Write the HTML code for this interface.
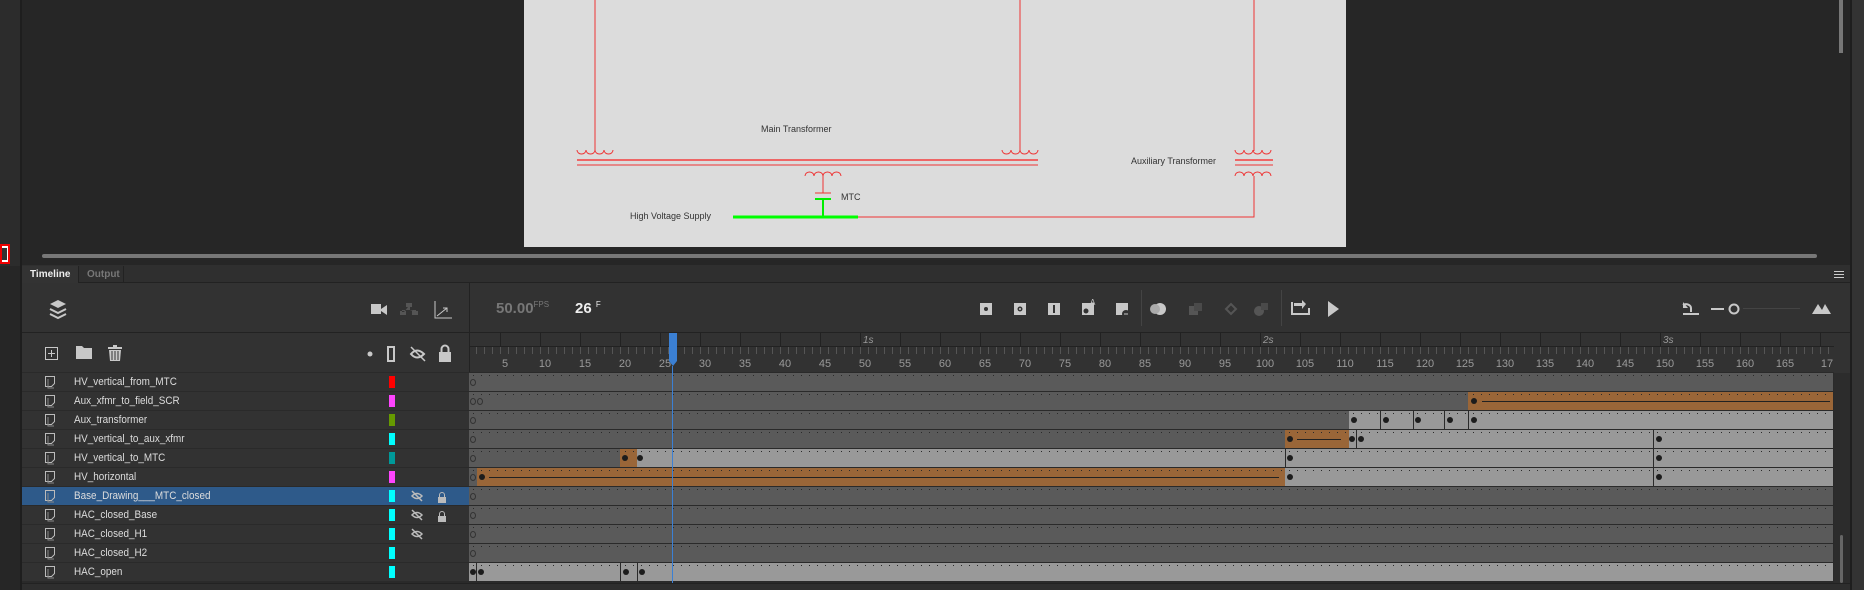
<!DOCTYPE html>
<html><head><meta charset="utf-8"><style>
*{margin:0;padding:0;box-sizing:border-box}
body{width:1864px;height:590px;background:#262626;position:relative;overflow:hidden;font-family:"Liberation Sans",sans-serif}
.a{position:absolute}
.row{position:absolute;height:18px}
.dk{background:#5a5a5a}
.lt{background:#999}
.or{background:#9a6638}
.kf{position:absolute;width:6px;height:6px;border-radius:50%;background:#1c1c1c;top:6px}
.dv{position:absolute;width:1px;height:18px;background:#2a2a2a;top:0}
.ln{position:absolute;height:1px;background:#2a2a2a;top:9px}
.ec{position:absolute;width:6px;height:7px;border:1px solid #333;border-radius:50%;top:6px;left:1px}
.name{position:absolute;left:52px;font-size:11px;color:#ddd;line-height:18px;transform:scaleX(.9);transform-origin:left}
.sw{position:absolute;left:367px;width:6px;height:12px;top:3px}
</style></head><body>
<div class="a" style="left:0;top:0;width:20px;height:266px;background:#2c2c2c"></div>
<div class="a" style="left:0;top:244px;width:10px;height:20px;border:2px solid #e00;background:#fff"></div>
<div class="a" style="left:2px;top:248px;width:5px;height:12px;background:#333"></div>
<div class="a" style="left:20px;top:0;width:2px;height:590px;background:#1e1e1e"></div>
<div class="a" style="left:1850px;top:0;width:14px;height:590px;background:#333;border-left:2px solid #1e1e1e"></div>
<div class="a" style="left:1839px;top:0;width:4px;height:53px;background:#777"></div>
<div class="a" style="left:42px;top:254px;width:1775px;height:4px;background:#777;border-radius:2px"></div>
<div class="a" style="left:524px;top:0;width:822px;height:247px;background:#dcdcdc"></div>
<svg class="a" style="left:0;top:0" width="1864" height="260" fill="none">
<g stroke="#e33" stroke-width="1">
<path d="M595 0V152M1020 0V152M1254 0V151"/>
<path d="M577 150a4.5 4 0 0 0 9 0a4.5 4 0 0 0 9 0a4.5 4 0 0 0 9 0a4.5 4 0 0 0 9 0"/>
<path d="M1002 150a4.5 4 0 0 0 9 0a4.5 4 0 0 0 9 0a4.5 4 0 0 0 9 0a4.5 4 0 0 0 9 0"/>
<path d="M1235 150a4.5 4 0 0 0 9 0a4.5 4 0 0 0 9 0a4.5 4 0 0 0 9 0a4.5 4 0 0 0 9 0"/>
<path d="M805 176a4.5 4 0 0 1 9 0a4.5 4 0 0 1 9 0a4.5 4 0 0 1 9 0a4.5 4 0 0 1 9 0"/>
<path d="M1235 176a4.5 4 0 0 1 9 0a4.5 4 0 0 1 9 0a4.5 4 0 0 1 9 0a4.5 4 0 0 1 9 0"/>
<path d="M577 165H1038M1235 165H1273M823 176V193M815 193H831M858 217H1254V176"/>
</g>
<path d="M577 160H1038M1235 160H1273" stroke="#e66" stroke-width="2"/>
<path d="M815 199H831M823 199V217" stroke="#0e0" stroke-width="2"/>
<path d="M733 217H858" stroke="#0f0" stroke-width="3"/>
<g fill="#333" font-family="Liberation Sans" font-size="9">
<text x="761" y="132">Main Transformer</text>
<text x="1131" y="164">Auxiliary Transformer</text>
<text x="841" y="200">MTC</text>
<text x="630" y="219">High Voltage Supply</text>
</g>
</svg>
<div class="a" style="left:22px;top:265px;width:1828px;height:18px;background:#2f2f2f;border-bottom:1px solid #222"></div>
<div class="a" style="left:22px;top:266px;width:56px;height:17px;background:#333;color:#eee;font-size:10px;font-weight:bold;line-height:17px;padding-left:8px">Timeline</div>
<div class="a" style="left:78px;top:266px;width:46px;height:17px;color:#777;font-size:10px;font-weight:bold;line-height:17px;padding-left:8px;border-left:1px solid #222;border-right:1px solid #222">Output</div>
<div class="a" style="left:1834px;top:271px;width:10px;height:7px;border-top:1px solid #ccc;border-bottom:1px solid #ccc"><div style="margin-top:2px;height:1px;background:#ccc"></div></div>
<div class="a" style="left:22px;top:283px;width:1828px;height:307px;background:#323232"></div>
<div class="a" style="left:22px;top:332px;width:447px;height:1px;background:#222"></div>
<div class="a" style="left:469px;top:283px;width:1px;height:307px;background:#222"></div>
<div class="a" style="left:470px;top:332px;width:1380px;height:1px;background:#222"></div>
<svg class="a" style="left:22px;top:283px" width="447" height="90" fill="#c8c8c8">
<path d="M28 21l8-4 8 4-8 4z"/><path d="M28 26l8 4 8-4" stroke="#c8c8c8" stroke-width="2" fill="none"/><path d="M28 31l8 4 8-4" stroke="#c8c8c8" stroke-width="2" fill="none"/>
<path d="M349 21h10v10h-10zM359 26l6-4v10l-6-4z"/>
<path d="M384 20h6v4h-6zM378 28h6v4h-6zM390 28h6v4h-6zM386 24h2v3h-8v2h2M388 27h6v2" fill="#555"/>
<path d="M413 18v17h17" stroke="#c8c8c8" fill="none"/><path d="M415 33l10-8M421 25h4v4" stroke="#c8c8c8" fill="none"/>
<rect x="23.5" y="64.5" width="12" height="12" fill="none" stroke="#c8c8c8"/><path d="M29.5 67v7M26 70.5h7" stroke="#c8c8c8"/>
<path d="M54 63h6l2 2h8v11h-16z"/>
<path d="M86 64h14v2h-14zM91 62h4v2h-4zM87 67h12l-1 11h-10z"/><path d="M90 68v9M93 68v9M96 68v9" stroke="#323232"/>
<circle cx="348" cy="71" r="2.5"/>
<rect x="366" y="64" width="6" height="14" fill="none" stroke="#c8c8c8" stroke-width="2"/>
<path d="M389 71q6-7 13 0q-7 7-13 0z" fill="none" stroke="#c8c8c8" stroke-width="2"/><path d="M389 64l14 14" stroke="#c8c8c8" stroke-width="1.5"/>
<path d="M417 69h12v10h-12z"/><path d="M419.5 69v-3a3.5 3.5 0 0 1 7 0v3" fill="none" stroke="#c8c8c8" stroke-width="2"/>
</svg>
<div class="a" style="left:496px;top:300px;font-size:15px;color:#777;font-weight:bold">50.00<sup style="font-size:8px;font-weight:normal">FPS</sup></div>
<div class="a" style="left:575px;top:300px;font-size:15px;color:#eee;font-weight:bold">26 <sup style="font-size:8px;font-weight:normal">F</sup></div>
<svg class="a" style="left:470px;top:283px" width="1380" height="50">
<g fill="#c8c8c8">
<rect x="510" y="20" width="12" height="12"/><rect x="544" y="20" width="12" height="12"/><rect x="578" y="20" width="12" height="12"/><rect x="612" y="20" width="12" height="12"/><rect x="646" y="20" width="12" height="12"/>
<circle cx="690" cy="26" r="6"/><circle cx="685" cy="26" r="5" fill="#aaa"/>
<path d="M822 19v12h17v-6" fill="none" stroke="#c8c8c8" stroke-width="2"/>
<path d="M836 21l-4-4v3h-8v3h8v3z"/>
<path d="M858 18l11 8-11 8z"/>
<path d="M1213 22a5 4 0 0 1 8 3v4" fill="none" stroke="#c8c8c8" stroke-width="2"/><path d="M1213 31h16" stroke="#c8c8c8" stroke-width="2"/><path d="M1213 19v6h5z"/>
<rect x="1241" y="25" width="13" height="2"/><circle cx="1264" cy="26" r="4.5" fill="none" stroke="#c8c8c8" stroke-width="2"/>
<path d="M1342 31l6-10 4 6 3-6 6 10z"/>
</g>
<g fill="#323232"><circle cx="516" cy="26" r="2"/><circle cx="550" cy="26" r="2.5"/><rect x="583" y="22" width="2" height="8"/><circle cx="616" cy="28" r="2.5"/><circle cx="656" cy="31" r="4"/></g>
<circle cx="550" cy="26" r="1" fill="#c8c8c8"/>
<path d="M654 31h4" stroke="#c8c8c8"/>
<text x="620" y="22" font-size="8" fill="#c8c8c8" font-family="Liberation Sans">A</text>
<g fill="#555"><rect x="719" y="23" width="9" height="9"/><rect x="724" y="20" width="8" height="8" fill="#4a4a4a"/><path d="M756 26l5-5 5 5-5 5z" stroke="#555" stroke-width="2" fill="none"/><circle cx="789" cy="28" r="5"/><rect x="791" y="20" width="7" height="7" fill="#4a4a4a"/></g>
<rect x="671" y="7" width="1" height="36" fill="#444"/><rect x="811" y="7" width="1" height="36" fill="#444"/>
<rect x="1273" y="25" width="57" height="1" fill="#444"/>
</svg>
<div class="a" style="left:470px;top:346px;width:1364px;height:1px;background:#222"></div>
<div class="a" style="left:470px;top:333px;width:1364px;height:14px;background:repeating-linear-gradient(90deg,transparent 0 30px,#222 30px 31px,transparent 31px 40px)"></div>
<div class="a" style="left:470px;top:347px;width:1364px;height:7px;background:repeating-linear-gradient(90deg,transparent 0 6px,#555 6px 7px,transparent 7px 8px)"></div>
<div class="a" style="left:863px;top:335px;font-size:10px;color:#999;font-style:italic">1s</div>
<div class="a" style="left:1263px;top:335px;font-size:10px;color:#999;font-style:italic">2s</div>
<div class="a" style="left:1663px;top:335px;font-size:10px;color:#999;font-style:italic">3s</div>
<svg class="a" style="left:469px;top:355px" width="1370" height="16"><g font-family="Liberation Sans" font-size="11" fill="#999" text-anchor="middle">
<text x="36" y="12">5</text><text x="76" y="12">10</text><text x="116" y="12">15</text><text x="156" y="12">20</text><text x="196" y="12">25</text><text x="236" y="12">30</text><text x="276" y="12">35</text><text x="316" y="12">40</text><text x="356" y="12">45</text><text x="396" y="12">50</text><text x="436" y="12">55</text><text x="476" y="12">60</text><text x="516" y="12">65</text><text x="556" y="12">70</text><text x="596" y="12">75</text><text x="636" y="12">80</text><text x="676" y="12">85</text><text x="716" y="12">90</text><text x="756" y="12">95</text><text x="796" y="12">100</text><text x="836" y="12">105</text><text x="876" y="12">110</text><text x="916" y="12">115</text><text x="956" y="12">120</text><text x="996" y="12">125</text><text x="1036" y="12">130</text><text x="1076" y="12">135</text><text x="1116" y="12">140</text><text x="1156" y="12">145</text><text x="1196" y="12">150</text><text x="1236" y="12">155</text><text x="1276" y="12">160</text><text x="1316" y="12">165</text><text x="1358" y="12">17</text></g></svg>
<div class="a" style="left:469px;top:372px;width:1365px;height:211px;background:#2a2a2a"></div>
<div class="a" style="left:22px;top:372px;width:447px;height:211px;background:#2a2a2a"></div>
<div class="a" style="left:22px;top:373px;width:447px">
<div class="row" style="top:0;width:447px;background:#323232"><div class="name">HV_vertical_from_MTC</div><div class="sw" style="background:#f00"></div></div>
<div class="row" style="top:19px;width:447px;background:#323232"><div class="name">Aux_xfmr_to_field_SCR</div><div class="sw" style="background:#f4f"></div></div>
<div class="row" style="top:38px;width:447px;background:#323232"><div class="name">Aux_transformer</div><div class="sw" style="background:#690"></div></div>
<div class="row" style="top:57px;width:447px;background:#323232"><div class="name">HV_vertical_to_aux_xfmr</div><div class="sw" style="background:#0ff"></div></div>
<div class="row" style="top:76px;width:447px;background:#323232"><div class="name">HV_vertical_to_MTC</div><div class="sw" style="background:#099"></div></div>
<div class="row" style="top:95px;width:447px;background:#323232"><div class="name">HV_horizontal</div><div class="sw" style="background:#f4f"></div></div>
<div class="row" style="top:114px;width:447px;background:#2e5a8a"><div class="name">Base_Drawing___MTC_closed</div><div class="sw" style="background:#0ff"></div></div>
<div class="row" style="top:133px;width:447px;background:#323232"><div class="name">HAC_closed_Base</div><div class="sw" style="background:#0ff"></div></div>
<div class="row" style="top:152px;width:447px;background:#323232"><div class="name">HAC_closed_H1</div><div class="sw" style="background:#0ff"></div></div>
<div class="row" style="top:171px;width:447px;background:#323232"><div class="name">HAC_closed_H2</div><div class="sw" style="background:#0ff"></div></div>
<div class="row" style="top:190px;width:447px;background:#323232"><div class="name">HAC_open</div><div class="sw" style="background:#0ff"></div></div>
<svg class="a" style="left:0;top:0" width="447" height="210" fill="none" stroke="#bbb">
<g id="li"><path d="M23.5 3.5h9v7l-3 3h-6z"/><path d="M26 6v9h6" stroke="#888"/></g>
<use href="#li" y="19"/><use href="#li" y="38"/><use href="#li" y="57"/><use href="#li" y="76"/><use href="#li" y="95"/><use href="#li" y="114"/><use href="#li" y="133"/><use href="#li" y="152"/><use href="#li" y="171"/><use href="#li" y="190"/>
<g id="ey" stroke="#bbb" stroke-width="1.5"><path d="M390 123q5-5 10 0q-5 5-10 0z"/><path d="M390 118l10 10"/></g>
<use href="#ey" y="19"/><use href="#ey" y="38"/>
<g id="lk" fill="#bbb" stroke="none"><rect x="416" y="124" width="8" height="6"/><path d="M417.5 124v-2a2.5 2.5 0 0 1 5 0v2" stroke="#bbb" fill="none"/></g>
<use href="#lk" y="19"/>
</svg>
</div>
<div class="a" style="left:469px;top:373px;width:1365px;height:210px">
<div class="row dk" style="top:0;left:0;width:1364px"><div class="ec"></div></div>
<div class="row dk" style="top:19px;left:0;width:999px"><div class="ec"></div><div class="ec" style="left:8px"></div></div>
<div class="row or" style="top:19px;left:999px;width:365px"><div class="kf" style="left:3px"></div><div class="ln" style="left:14px;width:348px;background:#222"></div></div>
<div class="row dk" style="top:38px;left:0;width:880px"><div class="ec"></div></div>
<div class="row lt" style="top:38px;left:880px;width:484px"><div class="kf" style="left:2px"></div><div class="dv" style="left:31px"></div><div class="kf" style="left:34px"></div><div class="dv" style="left:64px"></div><div class="kf" style="left:66px"></div><div class="dv" style="left:95px"></div><div class="kf" style="left:98px"></div><div class="dv" style="left:119px"></div><div class="kf" style="left:122px"></div></div>
<div class="row dk" style="top:57px;left:0;width:816px"><div class="ec"></div></div>
<div class="row or" style="top:57px;left:816px;width:64px"><div class="kf" style="left:2px"></div><div class="ln" style="left:12px;width:44px;background:#222"></div></div>
<div class="row lt" style="top:57px;left:880px;width:484px"><div class="kf" style="left:0"></div><div class="dv" style="left:7px"></div><div class="kf" style="left:9px"></div><div class="dv" style="left:304px"></div><div class="kf" style="left:307px"></div></div>
<div class="row dk" style="top:76px;left:0;width:151px"><div class="ec"></div></div>
<div class="row or" style="top:76px;left:151px;width:17px"><div class="kf" style="left:2px"></div></div>
<div class="row lt" style="top:76px;left:168px;width:1196px"><div class="kf" style="left:0"></div><div class="dv" style="left:648px"></div><div class="kf" style="left:650px"></div><div class="dv" style="left:1016px"></div><div class="kf" style="left:1019px"></div></div>
<div class="row dk" style="top:95px;left:0;width:8px"><div class="ec"></div></div>
<div class="row or" style="top:95px;left:8px;width:808px"><div class="kf" style="left:2px"></div><div class="ln" style="left:12px;width:790px;background:#222"></div></div>
<div class="row lt" style="top:95px;left:816px;width:548px"><div class="kf" style="left:2px"></div><div class="dv" style="left:368px"></div><div class="kf" style="left:371px"></div></div>
<div class="row dk" style="top:114px;left:0;width:1364px"><div class="ec"></div></div>
<div class="row dk" style="top:133px;left:0;width:1364px"><div class="ec"></div></div>
<div class="row dk" style="top:152px;left:0;width:1364px"><div class="ec"></div></div>
<div class="row dk" style="top:171px;left:0;width:1364px"><div class="ec"></div></div>
<div class="row lt" style="top:190px;left:0;width:1364px"><div class="kf" style="left:1px"></div><div class="dv" style="left:7px"></div><div class="kf" style="left:9px"></div><div class="dv" style="left:151px"></div><div class="kf" style="left:154px"></div><div class="dv" style="left:168px"></div><div class="kf" style="left:170px"></div></div>
<div class="a" style="left:0;top:0;width:1364px;height:210px;background:repeating-linear-gradient(90deg,transparent 0 4px,#2a2a2a 4px 5px,transparent 5px 8px);-webkit-mask:repeating-linear-gradient(180deg,transparent 0 2px,#000 2px 3px,transparent 3px 19px);mask:repeating-linear-gradient(180deg,transparent 0 2px,#000 2px 3px,transparent 3px 19px)"></div>
</div>
<div class="a" style="left:669px;top:333px;width:8px;height:33px;background:#3b80d4;clip-path:polygon(0 0,100% 0,100% 85%,50% 100%,0 85%)"></div>
<div class="a" style="left:672px;top:366px;width:1px;height:217px;background:#3b80d4"></div>
<div class="a" style="left:1834px;top:373px;width:16px;height:217px;background:#2c2c2c"></div>
<div class="a" style="left:1840px;top:535px;width:3px;height:48px;background:#666;border-radius:2px"></div>
<div class="a" style="left:22px;top:583px;width:1828px;height:7px;background:#2e2e2e;border-top:1px solid #222"></div>
</body></html>
